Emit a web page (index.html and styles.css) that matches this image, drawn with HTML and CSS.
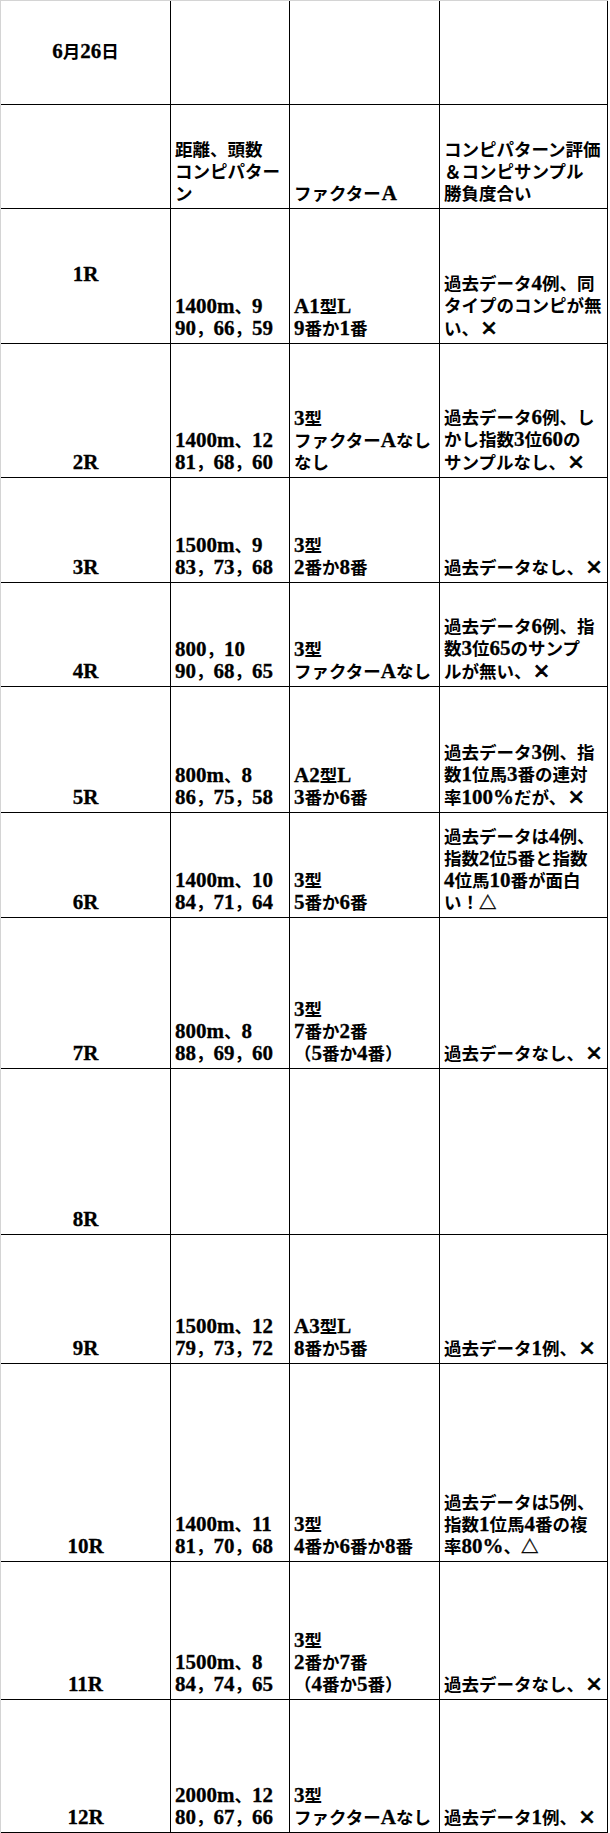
FILE: index.html
```html
<!DOCTYPE html>
<html lang="ja">
<head>
<meta charset="utf-8">
<title>6月26日</title>
<link rel="stylesheet" href="styles.css">
</head>
<body>
<div class="sheet">
  <div class="c first mid"><div class="t"><span class="n">6</span>月<span class="n">26</span>日</div></div>
  <div class="c"></div><div class="c"></div><div class="c"></div>

  <div class="c first"></div>
  <div class="c"><div class="t">距離、頭数<br>コンピパター<br>ン</div></div>
  <div class="c"><div class="t">ファクター<span class="n wide">A</span></div></div>
  <div class="c"><div class="t">コンピパターン評価<br>＆コンピサンプル<br>勝負度合い</div></div>

  <div class="c first mid"><div class="t"><span class="n">1R</span></div></div>
  <div class="c"><div class="t"><span class="n">1400m</span>、<span class="n">9</span><br><span class="n">90</span>，<span class="n">66</span>，<span class="n">59</span></div></div>
  <div class="c"><div class="t"><span class="n">A1</span>型<span class="n">L</span><br><span class="n">9</span>番か<span class="n">1</span>番</div></div>
  <div class="c"><div class="t">過去データ<span class="n">4</span>例、同<br>タイプのコンピが無<br>い、<span class="x">×</span></div></div>

  <div class="c first"><div class="t"><span class="n">2R</span></div></div>
  <div class="c"><div class="t"><span class="n">1400m</span>、<span class="n">12</span><br><span class="n">81</span>，<span class="n">68</span>，<span class="n">60</span></div></div>
  <div class="c"><div class="t"><span class="n">3</span>型<br>ファクター<span class="n">A</span>なし<br>なし</div></div>
  <div class="c"><div class="t">過去データ<span class="n">6</span>例、し<br>かし指数<span class="n">3</span>位<span class="n">60</span>の<br>サンプルなし、<span class="x">×</span></div></div>

  <div class="c first"><div class="t"><span class="n">3R</span></div></div>
  <div class="c"><div class="t"><span class="n">1500m</span>、<span class="n">9</span><br><span class="n">83</span>，<span class="n">73</span>，<span class="n">68</span></div></div>
  <div class="c"><div class="t"><span class="n">3</span>型<br><span class="n">2</span>番か<span class="n">8</span>番</div></div>
  <div class="c"><div class="t">過去データなし、<span class="x">×</span></div></div>

  <div class="c first"><div class="t"><span class="n">4R</span></div></div>
  <div class="c"><div class="t"><span class="n">800</span>，<span class="n">10</span><br><span class="n">90</span>，<span class="n">68</span>，<span class="n">65</span></div></div>
  <div class="c"><div class="t"><span class="n">3</span>型<br>ファクター<span class="n">A</span>なし</div></div>
  <div class="c"><div class="t">過去データ<span class="n">6</span>例、指<br>数<span class="n">3</span>位<span class="n">65</span>のサンプ<br>ルが無い、<span class="x">×</span></div></div>

  <div class="c first"><div class="t"><span class="n">5R</span></div></div>
  <div class="c"><div class="t"><span class="n">800m</span>、<span class="n">8</span><br><span class="n">86</span>，<span class="n">75</span>，<span class="n">58</span></div></div>
  <div class="c"><div class="t"><span class="n">A2</span>型<span class="n">L</span><br><span class="n">3</span>番か<span class="n">6</span>番</div></div>
  <div class="c"><div class="t">過去データ<span class="n">3</span>例、指<br>数<span class="n">1</span>位馬<span class="n">3</span>番の連対<br>率<span class="n">100%</span>だが、<span class="x">×</span></div></div>

  <div class="c first"><div class="t"><span class="n">6R</span></div></div>
  <div class="c"><div class="t"><span class="n">1400m</span>、<span class="n">10</span><br><span class="n">84</span>，<span class="n">71</span>，<span class="n">64</span></div></div>
  <div class="c"><div class="t"><span class="n">3</span>型<br><span class="n">5</span>番か<span class="n">6</span>番</div></div>
  <div class="c"><div class="t">過去データは<span class="n">4</span>例、<br>指数<span class="n">2</span>位<span class="n">5</span>番と指数<br><span class="n">4</span>位馬<span class="n">10</span>番が面白<br>い！<span class="tri">△</span></div></div>

  <div class="c first"><div class="t"><span class="n">7R</span></div></div>
  <div class="c"><div class="t"><span class="n">800m</span>、<span class="n">8</span><br><span class="n">88</span>，<span class="n">69</span>，<span class="n">60</span></div></div>
  <div class="c"><div class="t"><span class="n">3</span>型<br><span class="n">7</span>番か<span class="n">2</span>番<br>（<span class="n">5</span>番か<span class="n">4</span>番）</div></div>
  <div class="c"><div class="t">過去データなし、<span class="x">×</span></div></div>

  <div class="c first"><div class="t"><span class="n">8R</span></div></div>
  <div class="c"></div>
  <div class="c"></div>
  <div class="c"></div>

  <div class="c first"><div class="t"><span class="n">9R</span></div></div>
  <div class="c"><div class="t"><span class="n">1500m</span>、<span class="n">12</span><br><span class="n">79</span>，<span class="n">73</span>，<span class="n">72</span></div></div>
  <div class="c"><div class="t"><span class="n">A3</span>型<span class="n">L</span><br><span class="n">8</span>番か<span class="n">5</span>番</div></div>
  <div class="c"><div class="t">過去データ<span class="n">1</span>例、<span class="x">×</span></div></div>

  <div class="c first"><div class="t"><span class="n">10R</span></div></div>
  <div class="c"><div class="t"><span class="n">1400m</span>、<span class="n">11</span><br><span class="n">81</span>，<span class="n">70</span>，<span class="n">68</span></div></div>
  <div class="c"><div class="t"><span class="n">3</span>型<br><span class="n">4</span>番か<span class="n">6</span>番か<span class="n">8</span>番</div></div>
  <div class="c"><div class="t">過去データは<span class="n">5</span>例、<br>指数<span class="n">1</span>位馬<span class="n">4</span>番の複<br>率<span class="n">80%</span>、<span class="tri">△</span></div></div>

  <div class="c first"><div class="t"><span class="n">11R</span></div></div>
  <div class="c"><div class="t"><span class="n">1500m</span>、<span class="n">8</span><br><span class="n">84</span>，<span class="n">74</span>，<span class="n">65</span></div></div>
  <div class="c"><div class="t"><span class="n">3</span>型<br><span class="n">2</span>番か<span class="n">7</span>番<br>（<span class="n">4</span>番か<span class="n">5</span>番）</div></div>
  <div class="c"><div class="t">過去データなし、<span class="x">×</span></div></div>

  <div class="c first"><div class="t"><span class="n">12R</span></div></div>
  <div class="c"><div class="t"><span class="n">2000m</span>、<span class="n">12</span><br><span class="n">80</span>，<span class="n">67</span>，<span class="n">66</span></div></div>
  <div class="c"><div class="t"><span class="n">3</span>型<br>ファクター<span class="n">A</span>なし</div></div>
  <div class="c"><div class="t">過去データ<span class="n">1</span>例、<span class="x">×</span></div></div>
</div>
</body>
</html>
```
FILE: styles.css
```css
html, body {
  margin: 0;
  padding: 0;
  background: #ffffff;
}

body {
  font-family: "Noto Sans CJK JP", "Liberation Serif", sans-serif;
  font-weight: bold;
  font-size: 17.5px;
  line-height: 22px;
  color: #000000;
}

.sheet {
  display: grid;
  grid-template-columns: 170px 119px 150px 168px;
  grid-template-rows: 104px 104px 135px 134px 105px 104px 126px 105px 151px 166px 129px 198px 138px 133px;
  width: max-content;
  border-top: 1px solid #d4d4d4;
  border-left: 1px solid #d4d4d4;
}

.c {
  box-sizing: border-box;
  border-right: 1px solid #000000;
  border-bottom: 1px solid #000000;
  display: flex;
  flex-direction: column;
  justify-content: flex-end;
  padding: 0 1px 4px 4px;
  white-space: nowrap;
}

.c.first {
  align-items: center;
  padding-left: 0;
  padding-right: 0;
}

.c.mid {
  justify-content: center;
}

.t {
  display: block;
}

.n {
  font-family: "Liberation Serif", serif;
  font-size: 21px;
  line-height: 22px;
  -webkit-text-stroke: 0.3px #000000;
}

.n.wide {
  letter-spacing: 2px;
  padding-left: 1px;
}

.x {
  display: inline-block;
  height: 22px;
  line-height: 22px;
  font-family: "Noto Sans CJK JP", sans-serif;
  font-size: 18px;
  -webkit-text-stroke: 0.8px #000000;
  padding-left: 1px;
}

.tri {
  display: inline-block;
  height: 22px;
  line-height: 22px;
  -webkit-text-stroke: 0.4px #000000;
}
```
